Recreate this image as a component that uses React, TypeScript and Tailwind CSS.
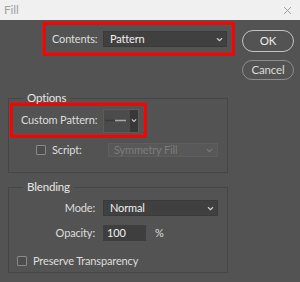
import { type ReactNode } from "react";

function Chevron({ className = "" }: { className?: string }) {
  return (
    <svg width="7" height="5" viewBox="0 0 7 5" className={className}>
      <path d="M1 1.2 L3.5 3.6 L6 1.2" fill="none" stroke="currentColor" strokeWidth="1.2" />
    </svg>
  );
}

function Checkbox() {
  return <span className="block w-[10px] h-[10px] border border-[#8a8a8a] bg-[#4d4d4d] rounded-[1px]" />;
}

function Group({ title, children, className = "" }: { title: string; children: ReactNode; className?: string }) {
  return (
    <fieldset className={`w-[220px] border border-[#464646] ${className}`}>
      <legend className="ml-[14px] px-[4px] leading-[14px] text-[#e6e6e6] text-[11.5px]">{title}</legend>
      {children}
    </fieldset>
  );
}

export default function App() {
  return (
    <div className="w-[300px] h-[282px] bg-[#535353] text-[11px] tracking-[-0.15px] text-[#dedede] overflow-hidden whitespace-nowrap" style={{ fontFamily: "Lato, 'Liberation Sans', sans-serif" }}>
      <div className="h-[20px] bg-[#f0f0f0] flex items-center justify-between px-[4px]">
        <span className="text-[#a3a3a3] text-[12px]">Fill</span>
        <svg width="9" height="9" viewBox="0 0 9 9" className="mr-[4px] text-[#a0a0a0]">
          <path d="M1 1 L8 8 M8 1 L1 8" stroke="currentColor" strokeWidth="1" />
        </svg>
      </div>

      <div className="flex">
        <div className="w-[235px] pl-[8px]">
          <div className="ml-[35px] mt-[2px] w-[192px] h-[34px] border-[3px] border-[#ff0000] flex items-center pl-[6px] pr-[5px]">
            <span className="flex-1">Contents:</span>
            <div className="shrink-0 w-[124px] h-[16px] bg-[#404040] border border-[#3a3a3a] flex items-center justify-between pl-[6px] pr-[3px] text-[#f0f0f0]">
              <span>Pattern</span>
              <Chevron className="text-[#cfcfcf]" />
            </div>
          </div>

          <Group title="Options" className="mt-[35px] h-[82px]">
            <div className="ml-[1px] -mt-[2px] w-[137px] h-[35px] border-[3px] border-[#ff0000] flex items-center pl-[8px] pr-[5px]">
              <span className="flex-1">Custom Pattern:</span>
              <div className="shrink-0 flex h-[24px] border border-[#5c5c5c]">
                <div className="w-[26px] bg-[#4b4b4b] flex items-center">
                  <svg width="26" height="3" viewBox="0 0 26 3">
                    <path d="M1 1.5 H11" stroke="#3a3a3a" strokeWidth="1.5" />
                    <path d="M11 1.5 H22" stroke="#a8a8a8" strokeWidth="1.5" />
                  </svg>
                </div>
                <div className="w-[8px] bg-[#383838] flex items-center justify-center">
                  <Chevron className="text-[#cfcfcf] w-[6px]" />
                </div>
              </div>
            </div>
            <div className="flex items-center mt-[4px] h-[16px]">
              <span className="ml-[27px]">
                <Checkbox />
              </span>
              <span className="ml-[6px] w-[56px]">Script:</span>
              <div className="w-[110px] h-[14px] bg-[#585858] border border-[#5e5e5e] flex items-center justify-between pl-[5px] pr-[4px] text-[#7c7c7c]">
                <span>Symmetry Fill</span>
                <Chevron className="text-[#777]" />
              </div>
            </div>
          </Group>

          <Group title="Blending" className="mt-[7px] h-[93px]">
            <div className="flex items-center mt-[6px]">
              <span className="w-[86px] text-right">Mode:</span>
              <div className="ml-[8px] w-[115px] h-[16px] bg-[#404040] border border-[#3a3a3a] flex items-center justify-between pl-[6px] pr-[3px] text-[#f0f0f0]">
                <span>Normal</span>
                <Chevron className="text-[#cfcfcf]" />
              </div>
            </div>
            <div className="flex items-center mt-[8px]">
              <span className="w-[86px] text-right">Opacity:</span>
              <div className="ml-[8px] w-[43px] h-[16px] bg-[#3e3e3e] flex items-center pl-[4px] text-[#f0f0f0]">100</div>
              <span className="ml-[9px]">%</span>
            </div>
            <div className="flex items-center mt-[12px]">
              <span className="ml-[8px]">
                <Checkbox />
              </span>
              <span className="ml-[6px]">Preserve Transparency</span>
            </div>
          </Group>
        </div>

        <div className="ml-[7px] mt-[10px] flex flex-col gap-[8px]">
          <button className="w-[52px] h-[22px] rounded-full border border-[#c4c4c4] text-[#ececec] text-[11.5px]">OK</button>
          <button className="w-[52px] h-[20px] rounded-full border border-[#8e8e8e] text-[#dcdcdc] text-[11.5px]">Cancel</button>
        </div>
      </div>
    </div>
  );
}
